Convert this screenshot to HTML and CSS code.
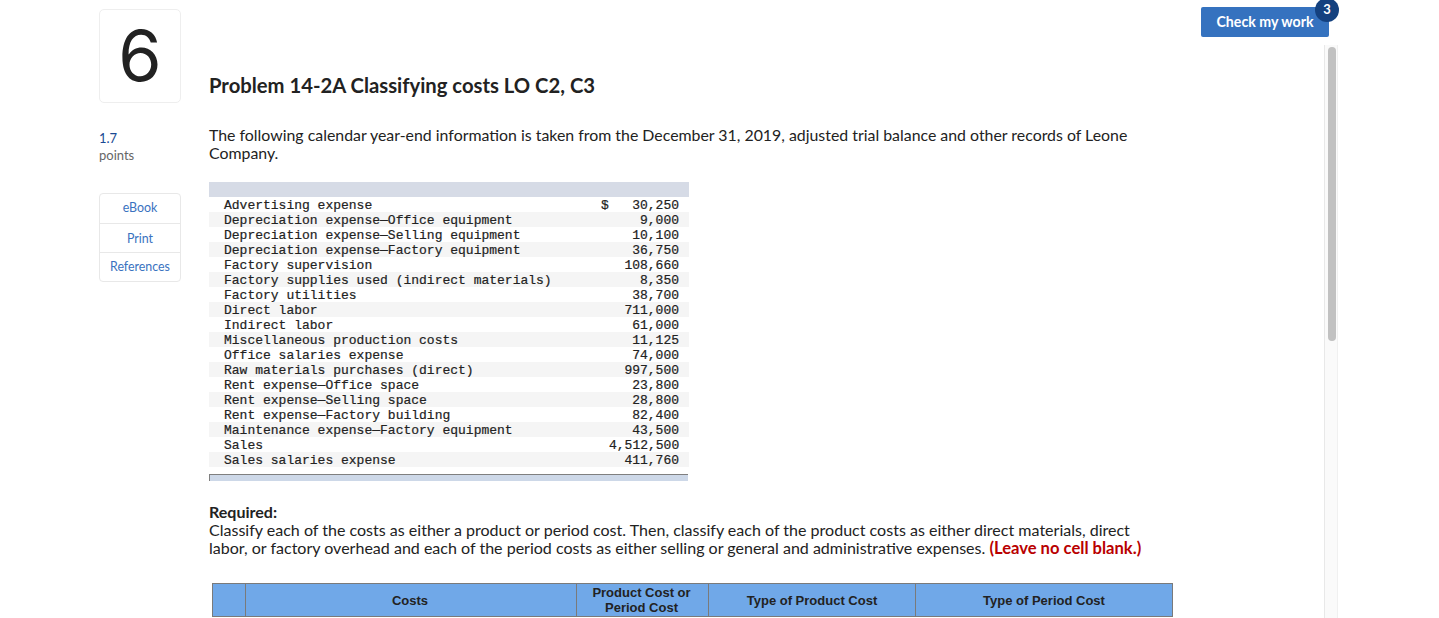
FILE: index.html
```html
<!DOCTYPE html>
<html lang="en">
<head>
<meta charset="utf-8">
<title>Problem 14-2A Classifying costs</title>
<link rel="stylesheet" href="styles.css">
</head>
<body>
<div class="page">
  <aside class="side">
    <div class="qnum">6</div>
    <div class="points"><span class="points-val">1.7</span><span class="points-lbl">points</span></div>
    <nav class="tools">
      <a class="tool tool-a">eBook</a>
      <a class="tool tool-b">Print</a>
      <a class="tool tool-c">References</a>
    </nav>
  </aside>
  <main class="main">
    <h1 class="title">Problem 14-2A Classifying costs LO C2, C3</h1>
    <p class="intro">The following calendar year-end information is taken from the December 31, 2019, adjusted trial balance and other records of Leone Company.</p>
    <div class="ledger">
      <div class="ledger-head"></div>
      <div class="row"><span class="row-name">Advertising expense</span><span class="row-cur">$</span><span class="row-val">30,250</span></div>
      <div class="row"><span class="row-name">Depreciation expense—Office equipment</span><span class="row-cur"></span><span class="row-val">9,000</span></div>
      <div class="row"><span class="row-name">Depreciation expense—Selling equipment</span><span class="row-cur"></span><span class="row-val">10,100</span></div>
      <div class="row"><span class="row-name">Depreciation expense—Factory equipment</span><span class="row-cur"></span><span class="row-val">36,750</span></div>
      <div class="row"><span class="row-name">Factory supervision</span><span class="row-cur"></span><span class="row-val">108,660</span></div>
      <div class="row"><span class="row-name">Factory supplies used (indirect materials)</span><span class="row-cur"></span><span class="row-val">8,350</span></div>
      <div class="row"><span class="row-name">Factory utilities</span><span class="row-cur"></span><span class="row-val">38,700</span></div>
      <div class="row"><span class="row-name">Direct labor</span><span class="row-cur"></span><span class="row-val">711,000</span></div>
      <div class="row"><span class="row-name">Indirect labor</span><span class="row-cur"></span><span class="row-val">61,000</span></div>
      <div class="row"><span class="row-name">Miscellaneous production costs</span><span class="row-cur"></span><span class="row-val">11,125</span></div>
      <div class="row"><span class="row-name">Office salaries expense</span><span class="row-cur"></span><span class="row-val">74,000</span></div>
      <div class="row"><span class="row-name">Raw materials purchases (direct)</span><span class="row-cur"></span><span class="row-val">997,500</span></div>
      <div class="row"><span class="row-name">Rent expense—Office space</span><span class="row-cur"></span><span class="row-val">23,800</span></div>
      <div class="row"><span class="row-name">Rent expense—Selling space</span><span class="row-cur"></span><span class="row-val">28,800</span></div>
      <div class="row"><span class="row-name">Rent expense—Factory building</span><span class="row-cur"></span><span class="row-val">82,400</span></div>
      <div class="row"><span class="row-name">Maintenance expense—Factory equipment</span><span class="row-cur"></span><span class="row-val">43,500</span></div>
      <div class="row"><span class="row-name">Sales</span><span class="row-cur"></span><span class="row-val">4,512,500</span></div>
      <div class="row"><span class="row-name">Sales salaries expense</span><span class="row-cur"></span><span class="row-val">411,760</span></div>
      <div class="ledger-foot"></div>
    </div>
    <p class="required"><strong>Required:</strong><br>Classify each of the costs as either a product or period cost. Then, classify each of the product costs as either direct materials, direct labor, or factory overhead and each of the period costs as either selling or general and administrative expenses. <strong class="warn">(Leave no cell blank.)</strong></p>
    <table class="answers">
      <thead>
        <tr>
          <th class="c-idx"></th>
          <th class="c-costs">Costs</th>
          <th class="c-pp">Product Cost or<br>Period Cost</th>
          <th class="c-prod">Type of Product Cost</th>
          <th class="c-per">Type of Period Cost</th>
        </tr>
      </thead>
    </table>
  </main>
  <aside class="rail">
    <button class="check" type="button">Check my work<span class="badge">3</span></button>
    <div class="scroll"><div class="thumb"></div></div>
  </aside>
</div>
</body>
</html>
```

FILE: styles.css
```css
* { box-sizing: border-box; }
html, body { margin: 0; height: 618px; overflow: hidden; background: #fff; }
body { font-family: "Lato", "Open Sans", sans-serif; color: #222; font-size: 15.88px; }
.page { display: flex; height: 618px; padding-left: 99px; overflow: hidden; }

.side { width: 82px; flex: none; padding-top: 9px; }
.qnum { height: 94px; border: 1px solid #eee; border-radius: 5px; text-align: center; font-family: "Inter", sans-serif; font-size: 70px; line-height: 92px; font-weight: 400; color: #222; }
.points { margin-top: 27px; display: flex; flex-direction: column; font-size: 13px; line-height: 17px; }
.points-val { color: #1a4a94; }
.points-lbl { color: #666; }
.tools { margin-top: 29px; border: 1px solid #e8e8e8; border-radius: 4px; display: flex; flex-direction: column; }
.tool { text-align: center; color: #3a72c0; font-size: 12.4px; border-bottom: 1px solid #e8e8e8; }
.tool-a { height: 30px; line-height: 28px; }
.tool-b { height: 29px; line-height: 30px; }
.tool-c { height: 28px; line-height: 27px; border-bottom: 0; }

.main { width: 966px; flex: none; margin-left: 28px; }
.title { margin: 73px 0 0; font-size: 20.25px; line-height: 24px; font-weight: 700; color: #222; }
.intro { margin: 29px 0 0; line-height: 18px; width: 935px; }
.ledger { margin-top: 20px; width: 480px; font-family: "Liberation Mono", monospace; font-size: 13px; line-height: 17px; color: #222; -webkit-text-stroke: 0.2px #222; }
.ledger-head { height: 15px; background: #d6dbe6; }
.row { display: flex; height: 15px; padding: 0 10px 0 15px; white-space: nowrap; }
.row:nth-child(odd) { background: #f5f5f5; }
.row-name { flex: 1; }
.row-cur { width: 8px; }
.row-val { width: 70px; text-align: right; }
.ledger-foot { margin-top: 7px; height: 7px; width: 479px; background: #cdd8e8; border-top: 1px solid #7f7f7f; border-left: 1px solid #7f7f7f; }

.required { margin: 22px 0 0; line-height: 18px; width: 935px; font-size: 16.05px; }
.warn { color: #b90000; font-size: 16.6px; }

.answers { margin: 26px 0 0 3px; width: 961px; height: 34px; border-collapse: collapse; table-layout: fixed; font-family: "Liberation Sans", sans-serif; }
.answers th { background: #70a8e8; border: 1px solid #7a7a7a; color: #222; font-size: 13px; line-height: 15px; padding: 0; font-weight: 700; }
.c-idx { width: 33px; }
.answers .c-costs { width: 331px; padding-right: 2px; }
.answers .c-pp { width: 132px; padding-right: 2px; }
.c-prod { width: 207px; }

.rail { width: 137px; flex: none; margin-left: 26px; padding-top: 7px; display: flex; flex-direction: column; align-items: flex-start; }
.check { position: relative; width: 128px; height: 30px; padding: 0 0 2px; border: 0; border-radius: 2px; background: #3572bf; color: #fff; font-family: "Lato", sans-serif; font-weight: 700; font-size: 14.2px; }
.badge { position: absolute; right: -10px; top: -9px; width: 24px; height: 24px; border-radius: 50%; background: #14417f; color: #fff; font-size: 13px; line-height: 22px; text-align: center; }
.scroll { margin: 8px 0 0 123px; width: 14px; flex: 1; background: #fafafa; border-left: 1px solid #e8e8e8; border-right: 1px solid #f0f0f0; padding: 2px 1px 0 3px; }
.thumb { height: 294px; background: #c1c1c1; border-radius: 4px; }
```
